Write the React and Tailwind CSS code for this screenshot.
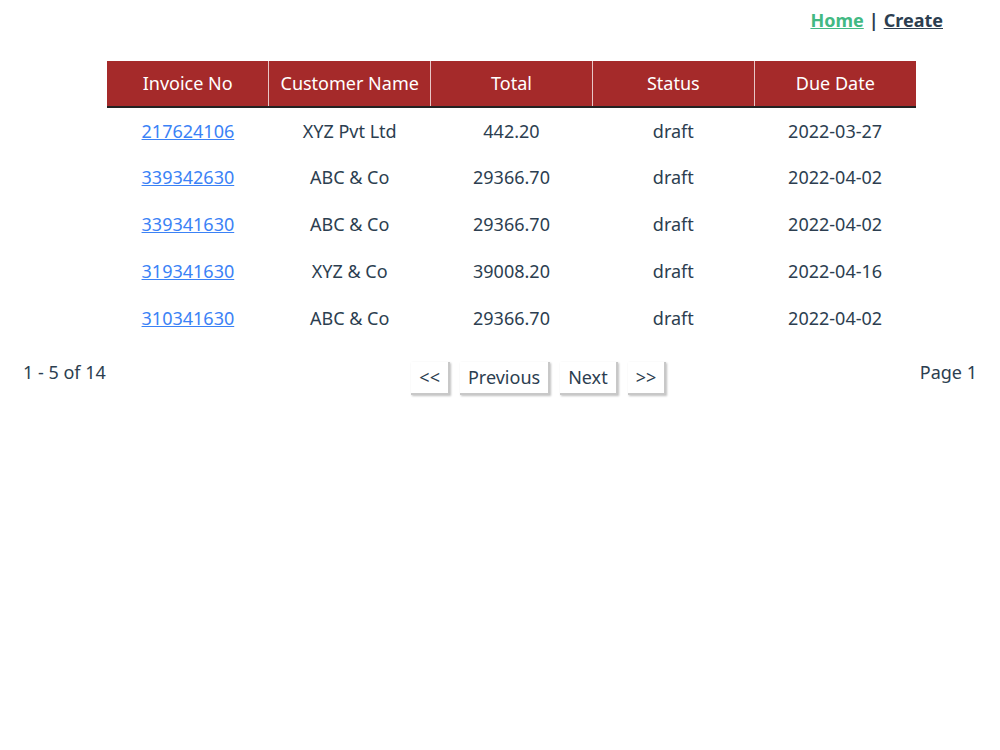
export default function App() {
  const rows = [
    ["217624106", "XYZ Pvt Ltd", "442.20", "draft", "2022-03-27"],
    ["339342630", "ABC & Co", "29366.70", "draft", "2022-04-02"],
    ["339341630", "ABC & Co", "29366.70", "draft", "2022-04-02"],
    ["319341630", "XYZ & Co", "39008.20", "draft", "2022-04-16"],
    ["310341630", "ABC & Co", "29366.70", "draft", "2022-04-02"],
  ]
  const heads = ["Invoice No", "Customer Name", "Total", "Status", "Due Date"]
  const btn = "bg-white px-2 h-[33px] border-r-2 border-b-2 border-[#c8c8c8] shadow-[1px_1px_2px_rgba(0,0,0,0.25)] text-[#2c3e50]"

  return (
    <div className="min-h-[750px] bg-white font-['Liberation_Sans',Arial,sans-serif] text-[18px] text-[#2c3e50]">
      {/* NAV */}
      <div className="flex justify-end pr-[57px] pt-[7px] font-bold">
        <a href="#" className="text-[#42b983] underline">Home</a>
        <span className="mx-[5px]">|</span>
        <a href="#" className="underline">Create</a>
      </div>

      {/* TABLE */}
      <table className="mt-[27px] ml-[107px] w-[809px] border-collapse table-fixed">
        <thead>
          <tr className="bg-[#a52a2a] text-white border-b-2 border-[#222]">
            {heads.map((h, i) => (
              <th key={h} className={`h-[46px] font-normal ${i > 0 ? "border-l border-[#e8c6c6]" : ""}`}>{h}</th>
            ))}
          </tr>
        </thead>
        <tbody>
          {rows.map((r, i) => (
            <tr key={i} className="h-[47px] text-center">
              <td><a href="#" className="text-[#3b82f6] underline">{r[0]}</a></td>
              <td>{r[1]}</td>
              <td>{r[2]}</td>
              <td>{r[3]}</td>
              <td>{r[4]}</td>
            </tr>
          ))}
        </tbody>
      </table>

      {/* PAGINATION */}
      <div className="flex items-start justify-between px-[23px] mt-[20px]">
        <span className="mt-[-3px]">1 - 5 of 14</span>
        <div className="flex gap-[10px] ml-[52px]">
          <button className={btn}>&lt;&lt;</button>
          <button className={btn}>Previous</button>
          <button className={btn}>Next</button>
          <button className={btn}>&gt;&gt;</button>
        </div>
        <span className="mt-[-3px]">Page 1</span>
      </div>
    </div>
  )
}
